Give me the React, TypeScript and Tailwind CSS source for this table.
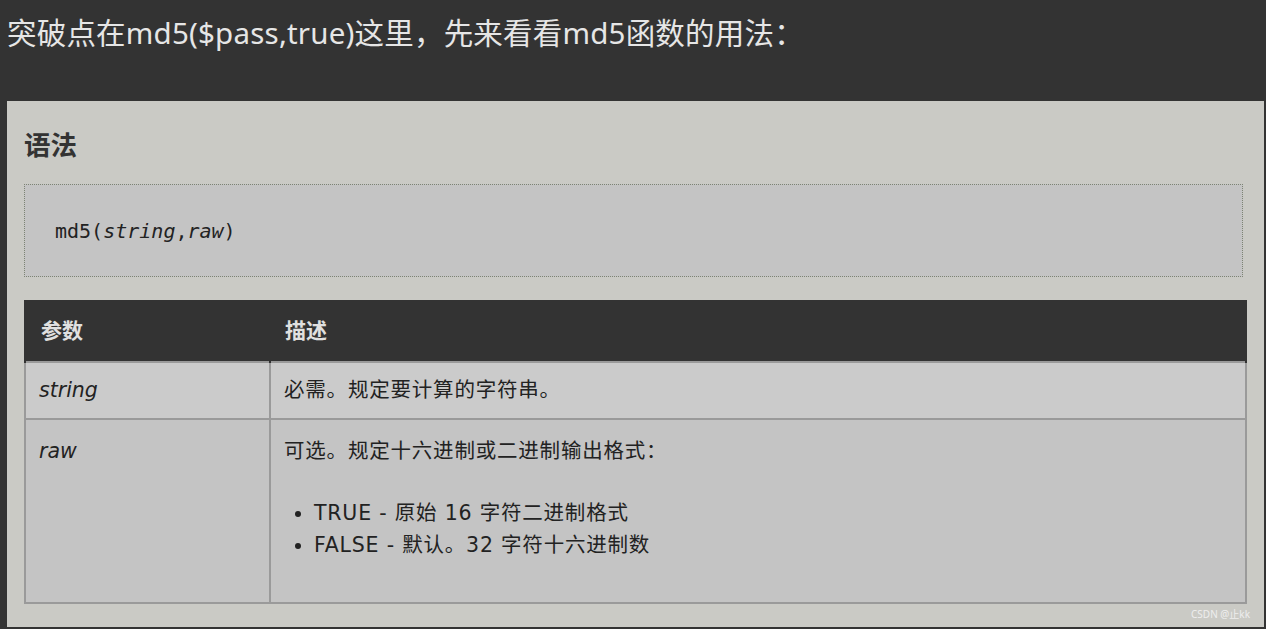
import React from "react";

const sans = { fontFamily: '"Noto Sans", "Noto Sans CJK SC", sans-serif' };
const body = { fontFamily: '"DejaVu Sans", "Noto Sans CJK SC", sans-serif' };

export default function App() {
  return (
    <div className="w-full h-[629px] bg-[#333333] overflow-hidden flex flex-col" style={sans}>
      <div className="h-[101px] pl-[7px] pt-[15px] shrink-0">
        <div className="text-[29.5px] leading-[36px] text-[#e6e6e6] tracking-[0.2px]">
          突破点在md5($pass,true)这里，先来看看md5函数的用法：
        </div>
      </div>
      <div className="ml-[7px] mr-[2px] h-[526px] bg-[#cacac5] pl-[17px] pt-[29px] relative">
        <div className="text-[26.5px] leading-[30px] font-bold text-[#333333]">语法</div>
        <div className="mt-[24px] mr-[21px] h-[93px] bg-[#c4c4c4] border border-dotted border-[#7d8474] flex items-center pl-[30px]">
          <span className="text-[20px] text-[#222222]" style={{ fontFamily: '"DejaVu Sans Mono", monospace' }}>
            md5(<i>string</i>,<i>raw</i>)
          </span>
        </div>
        <table className="mt-[23px] w-[1223px] border-collapse table-fixed" style={body}>
          <colgroup>
            <col className="w-[245px]" />
            <col />
          </colgroup>
          <thead>
            <tr className="h-[62px] bg-[#333333]">
              <th className="text-left align-middle pl-[15px] text-[21px] font-bold text-[#e0e0e0] border-x-2 border-[#333333]" style={sans}>参数</th>
              <th className="text-left align-middle pl-[14px] text-[21px] font-bold text-[#e0e0e0] border-x-2 border-[#333333]" style={sans}>描述</th>
            </tr>
          </thead>
          <tbody className="text-[20.5px] text-[#222222] tracking-[0.8px]">
            <tr className="h-[57px] bg-[#cbcbcb]">
              <td className="border-2 border-[#9a9a9a] pl-[13px] align-middle tracking-normal"><i>string</i></td>
              <td className="border-2 border-[#9a9a9a] pl-[13px] align-middle">必需。规定要计算的字符串。</td>
            </tr>
            <tr className="h-[184px] bg-[#c4c4c4]">
              <td className="border-2 border-[#9a9a9a] pl-[13px] align-top pt-[15px] leading-[32px] tracking-normal"><i>raw</i></td>
              <td className="border-2 border-[#9a9a9a] pl-[13px] align-top pt-[15px] leading-[32px]">
                <p>可选。规定十六进制或二进制输出格式：</p>
                <ul className="list-disc pl-[30px] mt-[30px]">
                  <li>TRUE - 原始 16 字符二进制格式</li>
                  <li>FALSE - 默认。32 字符十六进制数</li>
                </ul>
              </td>
            </tr>
          </tbody>
        </table>
        <div className="absolute right-[14px] bottom-[7px] text-[10px] leading-[12px] text-[#eeeeee]">CSDN @止kk</div>
      </div>
    </div>
  );
}
